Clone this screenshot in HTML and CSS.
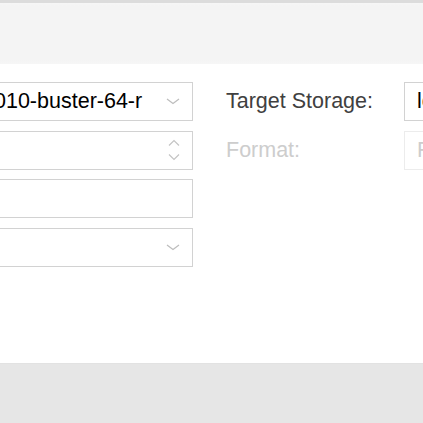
FILE: index.html
```html
<!DOCTYPE html>
<html>
<head>
<meta charset="utf-8">
<link rel="stylesheet" href="styles.css">
</head>
<body>
<div class="header"></div>
<div class="main">
  <div class="col left">
    <div class="field sel">
      <span class="value">010-buster-64-r</span>
      <svg class="trig" width="14" height="7" viewBox="0 0 14 7"><polyline points="1,1 7,5.5 13,1" fill="none" stroke="#bdbdbd" stroke-width="1.2"/></svg>
    </div>
    <div class="field sel">
      <span class="value"></span>
      <svg class="trig" width="12" height="22" viewBox="0 0 12 22"><polyline points="1,6.5 6,1.5 11,6.5" fill="none" stroke="#c4c4c4" stroke-width="1.2"/><polyline points="1,15.5 6,20.5 11,15.5" fill="none" stroke="#c4c4c4" stroke-width="1.2"/></svg>
    </div>
    <div class="field"><span class="value"></span></div>
    <div class="field sel">
      <span class="value"></span>
      <svg class="trig" width="14" height="7" viewBox="0 0 14 7"><polyline points="1,1 7,5.5 13,1" fill="none" stroke="#bdbdbd" stroke-width="1.2"/></svg>
    </div>
  </div>
  <div class="col right">
    <div class="row">
      <span class="label">Target Storage:</span>
      <div class="field rfield"><span class="value">local</span></div>
    </div>
    <div class="row disabled">
      <span class="label">Format:</span>
      <div class="field rfield"><span class="value">Raw disk image</span></div>
    </div>
  </div>
</div>
<div class="footer"></div>
</body>
</html>
```

FILE: styles.css
```css
html, body {
  margin: 0;
  padding: 0;
  width: 423px;
  height: 423px;
  overflow: hidden;
  background: #ffffff;
  font-family: "Liberation Sans", Arial, sans-serif;
}
body {
  display: flex;
  flex-direction: column;
}
.header {
  height: 61px;
  flex: none;
  border-top: 3px solid #dcdcdc;
  background: linear-gradient(#f6f6f6 0, #f4f4f4 3px, #f4f4f4 57px, #f6f6f6 61px);
}
.main {
  flex: 1;
  display: flex;
  padding-top: 18px;
  gap: 33px;
  overflow: hidden;
}
.col {
  display: flex;
  flex-direction: column;
  gap: 9.7px;
}
.left {
  width: 213px;
  margin-left: -20px;
  flex: none;
}
.right {
  flex: none;
  width: 260px;
}
.field {
  box-sizing: border-box;
  height: 39px;
  border: 1px solid #d2d2d2;
  display: flex;
  align-items: center;
  padding-left: 13px;
  padding-right: 12px;
  font-size: 21.5px;
  color: #000;
  overflow: hidden;
  white-space: nowrap;
}
.value {
  flex: 1;
  overflow: hidden;
}
.trig {
  flex: none;
  margin-left: 4px;
}
.row {
  display: flex;
  align-items: center;
  height: 39px;
}
.label {
  width: 178px;
  flex: none;
  font-size: 21.5px;
  color: #404040;
  white-space: nowrap;
}
.rfield {
  width: 120px;
  flex: none;
  padding-left: 12px;
}
.disabled .label {
  color: #cdcdcd;
}
.disabled .rfield {
  border-color: #ececec;
  color: #cdcdcd;
}
.footer {
  height: 59px;
  flex: none;
  border-top: 1px solid #e2e2e2;
  background: #e6e6e6;
}
```
